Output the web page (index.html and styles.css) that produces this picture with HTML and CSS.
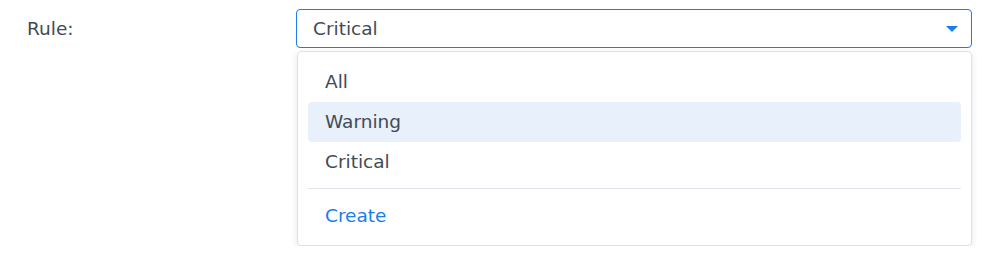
FILE: index.html
```html
<!DOCTYPE html>
<html>
<head>
<meta charset="utf-8">
<link rel="stylesheet" href="styles.css">
</head>
<body>
<div class="form-row">
  <label class="label">Rule:</label>
  <div class="field">
    <div class="select">
      <span class="select-value">Critical</span>
      <svg class="caret" width="12" height="6" viewBox="0 0 12 6"><path d="M0 0 H12 L6 6 Z" fill="#1a7ee8"/></svg>
    </div>
    <div class="menu">
      <div class="item">All</div>
      <div class="item active">Warning</div>
      <div class="item">Critical</div>
      <div class="sep"></div>
      <div class="item link">Create</div>
    </div>
  </div>
</div>
</body>
</html>
```
FILE: styles.css
```css
html, body {
  margin: 0;
  padding: 0;
  background: #ffffff;
}
body {
  font-family: "DejaVu Sans", Verdana, sans-serif;
  font-size: 18.5px;
  color: #414b55;
}
.form-row {
  display: flex;
  padding-top: 9px;
}
.label {
  width: 269px;
  padding-left: 27px;
  line-height: 39px;
}
.field {
  width: 676px;
  display: flex;
  flex-direction: column;
}
.select {
  height: 39px;
  box-sizing: border-box;
  border: 1px solid #1a7ee8;
  border-radius: 4px;
  display: flex;
  align-items: center;
  justify-content: space-between;
  padding: 0 13px 0 16px;
}
.select-value {
  line-height: 37px;
}
.caret {
  display: block;
}
.menu {
  margin-top: 3px;
  margin-left: 1px;
  border: 1px solid #dde2e9;
  border-radius: 4px;
  box-shadow: 0 2px 6px rgba(40, 60, 90, 0.12);
  padding: 10px 10px 9px;
  display: flex;
  flex-direction: column;
}
.item {
  height: 40px;
  line-height: 40px;
  padding-left: 17px;
  border-radius: 4px;
}
.item.active {
  background: #e8f0fb;
}
.item.link {
  color: #1a7ee8;
}
.sep {
  height: 1px;
  background: #e1e6ec;
  margin: 6px 0 7px;
}
```
